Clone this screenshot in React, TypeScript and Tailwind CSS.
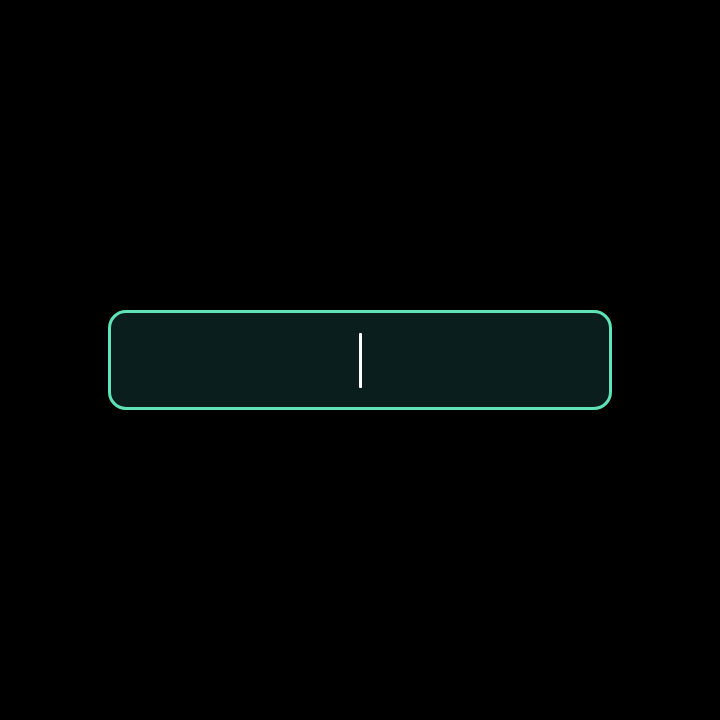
export default function App() {
  return (
    <div className="flex h-[720px] w-[720px] items-center justify-center bg-black">
      <div className="flex h-[100px] w-[504px] items-center justify-center rounded-[18px] border-[3px] border-[#5fe3b6] bg-[#0a1e1d]">
        <span className="h-[55px] w-[3px] rounded-[1px] bg-white" />
      </div>
    </div>
  );
}
